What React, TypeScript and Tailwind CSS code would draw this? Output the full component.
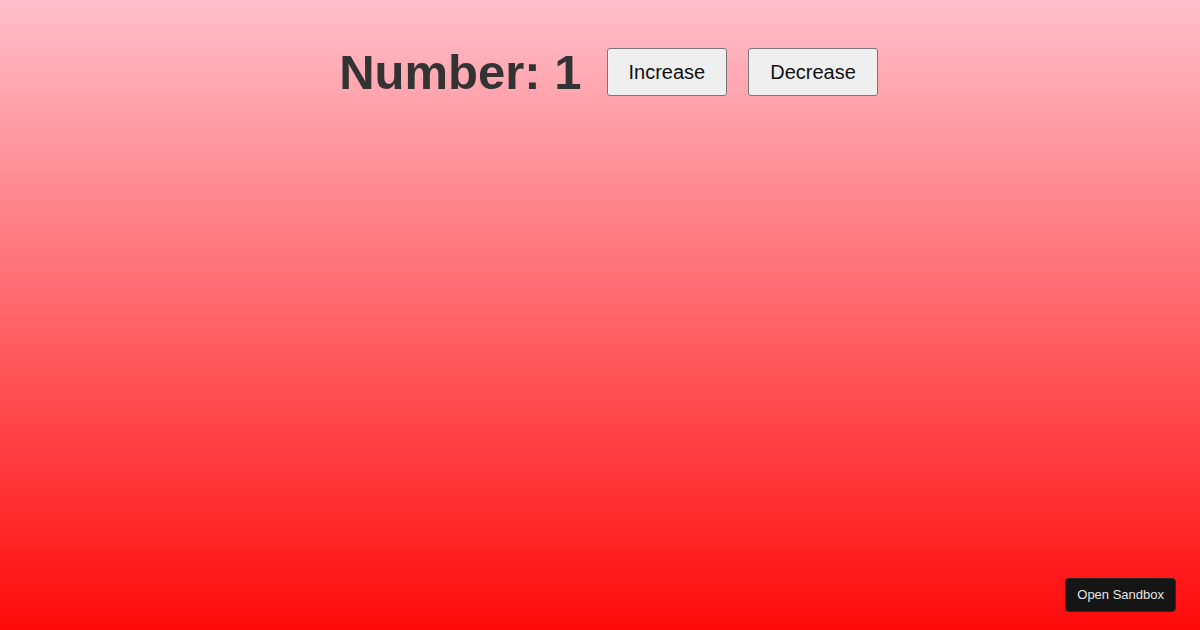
export default function App() {
  return (
    <div
      className="relative h-screen w-full overflow-hidden bg-[linear-gradient(to_bottom,#ffc0cb,#ff0a0a)]"
      style={{ fontFamily: '"Liberation Sans", Arial, sans-serif' }}
    >
      <div className="flex items-center justify-center pt-[45px] pl-[17px]">
        <h1 className="text-[49px] leading-[54px] font-bold text-[#333333]">Number: 1</h1>
        <button className="ml-[25px] h-[48px] rounded-[3px] border border-[#767676] bg-[#efefef] px-[21px] text-[20px] text-[#111111]">
          Increase
        </button>
        <button className="ml-[21px] h-[48px] rounded-[3px] border border-[#767676] bg-[#efefef] px-[21px] text-[20px] text-[#111111]">
          Decrease
        </button>
      </div>

      <button className="absolute right-[24px] bottom-[18px] h-[34px] rounded-[4px] border border-[#2a2a2a] bg-[#151515] px-[11px] text-[13px] text-[#e6e6e6]">
        Open Sandbox
      </button>
    </div>
  );
}
